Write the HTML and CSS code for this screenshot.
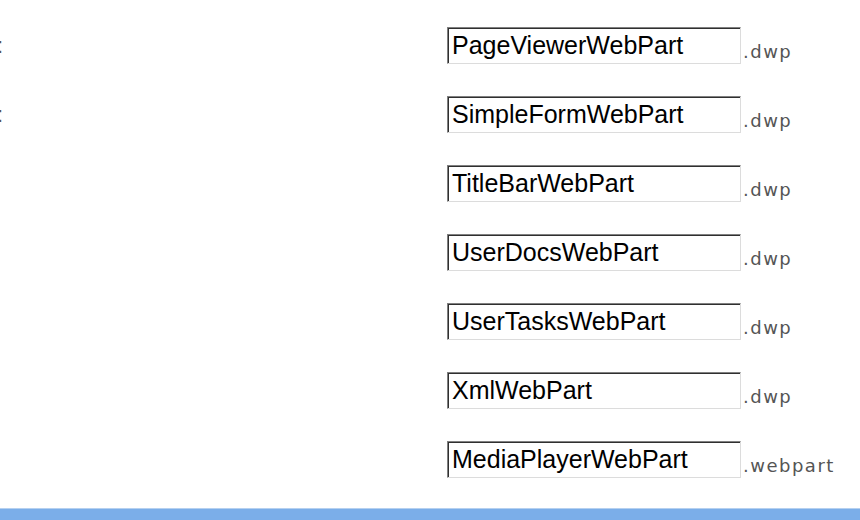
FILE: index.html
```html
<!DOCTYPE html>
<html lang="en">
<head>
    <meta charset="UTF-8">
    <meta name="viewport" content="width=device-width, initial-scale=1.0">
    <title>Web Part files</title>
    <link rel="stylesheet" href="styles.css">
</head>
<body>
    <div class="form">
        <div class="row">
            <div class="label"><span>:</span></div>
            <input type="text" class="name" value="PageViewerWebPart">
            <span class="ext">.dwp</span>
        </div>
        <div class="row">
            <div class="label"><span>:</span></div>
            <input type="text" class="name" value="SimpleFormWebPart">
            <span class="ext">.dwp</span>
        </div>
        <div class="row">
            <div class="label"></div>
            <input type="text" class="name" value="TitleBarWebPart">
            <span class="ext">.dwp</span>
        </div>
        <div class="row">
            <div class="label"></div>
            <input type="text" class="name" value="UserDocsWebPart">
            <span class="ext">.dwp</span>
        </div>
        <div class="row">
            <div class="label"></div>
            <input type="text" class="name" value="UserTasksWebPart">
            <span class="ext">.dwp</span>
        </div>
        <div class="row">
            <div class="label"></div>
            <input type="text" class="name" value="XmlWebPart">
            <span class="ext">.dwp</span>
        </div>
        <div class="row">
            <div class="label"></div>
            <input type="text" class="name" value="MediaPlayerWebPart">
            <span class="ext">.webpart</span>
        </div>
    </div>
    <div class="footer"></div>
</body>
</html>
```

FILE: styles.css
```css
html, body{
    margin: 0;
    height: 100%;
}
body{
    display: flex;
    flex-direction: column;
    background: #fff;
    font-family: "Liberation Sans", Arial, sans-serif;
    overflow: hidden;
}
.form{
    flex: 1;
    display: flex;
    flex-direction: column;
    gap: 32px;
    padding-top: 27px;
}
.row{
    display: flex;
    align-items: flex-end;
    height: 37px;
}
.label{
    width: 447px;
    height: 37px;
    overflow: hidden;
    display: flex;
    align-items: center;
    flex-shrink: 0;
}
.label span{
    margin-left: -3px;
    font-size: 22px;
    color: #555;
}
.name{
    box-sizing: border-box;
    width: 294px;
    height: 37px;
    margin: 0;
    padding: 0 0 0 4px;
    border: 1px solid;
    border-color: #808080 #dcdcdc #dcdcdc #808080;
    box-shadow: inset 1px 1px 0 #303030;
    background: #fff;
    font-family: "Liberation Sans", Arial, sans-serif;
    font-size: 25px;
    color: #000;
    outline: none;
}
.ext{
    margin-left: 2px;
    margin-bottom: 2px;
    font-family: "DejaVu Sans", Verdana, sans-serif;
    font-size: 18px;
    letter-spacing: 1.5px;
    color: #555;
}
.footer{
    height: 11px;
    border-top: 1px solid #b5d0f0;
    background: #7baee9;
}
```
